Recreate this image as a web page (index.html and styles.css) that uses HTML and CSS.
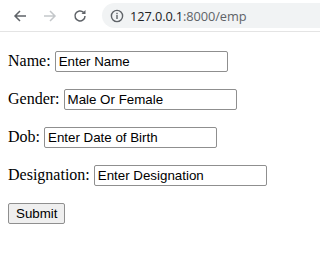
FILE: index.html
```html
<!DOCTYPE html>
<html>
<head>
<meta charset="utf-8">
<link rel="stylesheet" href="styles.css">
</head>
<body>
<div class="chrome">
  <svg class="nav" width="16" height="16" viewBox="0 0 16 16"><path d="M14 8H3M8 3L3 8l5 5" fill="none" stroke="#5f6368" stroke-width="1.5"/></svg>
  <svg class="nav" width="16" height="16" viewBox="0 0 16 16"><path d="M2 8h11M8 3l5 5-5 5" fill="none" stroke="#c4c7ca" stroke-width="1.5"/></svg>
  <svg class="nav" width="16" height="16" viewBox="0 0 16 16"><path d="M13 8a5 5 0 1 1-1.5-3.6" fill="none" stroke="#5f6368" stroke-width="1.5"/><path d="M13.5 2v4h-4z" fill="#5f6368"/></svg>
  <div class="omnibox">
    <svg class="info" width="14" height="14" viewBox="0 0 14 14"><circle cx="7" cy="7" r="5.6" fill="none" stroke="#5f6368" stroke-width="1.4"/><rect x="6.3" y="6" width="1.4" height="4" fill="#5f6368"/><rect x="6.3" y="3.8" width="1.4" height="1.4" fill="#5f6368"/></svg>
    <span class="host">127.0.0.1</span><span class="path">:8000/emp</span>
  </div>
</div>
<form class="form">
  <p class="row"><label>Name:</label> <input type="text" value="Enter Name"></p>
  <p class="row"><label>Gender:</label> <input type="text" value="Male Or Female"></p>
  <p class="row"><label>Dob:</label> <input type="text" value="Enter Date of Birth"></p>
  <p class="row"><label>Designation:</label> <input type="text" value="Enter Designation"></p>
  <p class="row"><button type="button">Submit</button></p>
</form>
</body>
</html>
```
FILE: styles.css
```css
html, body {
  margin: 0;
  background: #fff;
}
body {
  font-family: "Liberation Serif", "Times New Roman", serif;
  font-size: 16px;
  color: #000;
}
.chrome {
  height: 31px;
  border-bottom: 1px solid #e4e4e4;
  display: flex;
  align-items: center;
  box-sizing: content-box;
}
.nav {
  margin-left: 12px;
  margin-right: 2px;
  flex: none;
}
.nav + .nav {
  margin-left: 12px;
}
.omnibox {
  margin-left: 12px;
  flex: 1;
  height: 25px;
  background: #f1f3f4;
  border-radius: 13px 0 0 13px;
  display: flex;
  align-items: center;
  font-family: "Open Sans", "Noto Sans", sans-serif;
  font-size: 12.8px;
  letter-spacing: -0.1px;
}
.info {
  margin-left: 8px;
  margin-right: 6px;
}
.host { color: #202124; }
.path { color: #5f6368; }
.form {
  padding: 2px 8px 0;
  overflow: hidden;
}
.row {
  margin: 16px 0;
  line-height: 22px;
}
input {
  font-family: "Liberation Sans", Arial, sans-serif;
  font-size: 13.333px;
  color: #000;
  width: 173px;
  height: 21px;
  box-sizing: border-box;
  padding: 1px 3px;
  border: 1px solid #8f8f8f;
  border-radius: 2px;
  background: #fff;
  vertical-align: baseline;
}
button {
  font-family: "Liberation Sans", Arial, sans-serif;
  font-size: 13.333px;
  color: #000;
  height: 21px;
  box-sizing: border-box;
  padding: 1px 7px;
  border: 1px solid #8f8f8f;
  border-radius: 2px;
  background: #efefef;
}
```
